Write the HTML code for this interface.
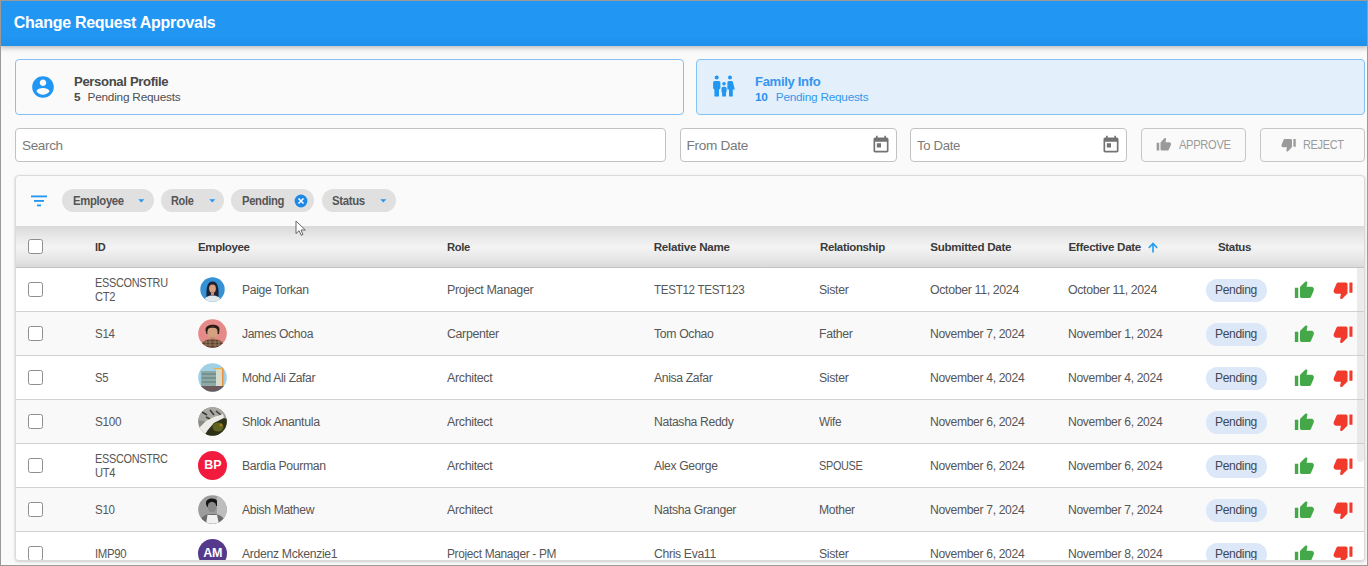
<!DOCTYPE html>
<html><head><meta charset="utf-8"><title>Change Request Approvals</title>
<style>
*{box-sizing:border-box;margin:0;padding:0}
html,body{width:1368px;height:566px;overflow:hidden;background:#fafafa;font-family:"Liberation Sans",sans-serif;color:#424242}
.abs{position:absolute}
.frame{position:absolute;left:0;top:0;width:1368px;height:566px;border:1px solid #9c9a98;pointer-events:none;z-index:50}
.appbar{position:absolute;left:0;top:1px;width:1368px;height:44.7px;background:linear-gradient(#2196f3 80%,#1f90ea 100%);box-shadow:0 2px 5px rgba(0,0,0,.25);z-index:5}
.card{position:absolute;top:59px;height:56px;border:1px solid #84c0f5;border-radius:4px;background:#fafafa}
.ct{position:absolute;white-space:nowrap;line-height:1}
.inp{position:absolute;top:128px;height:34px;border:1px solid #c2c2c2;border-radius:4px;background:#fff}
.btn{position:absolute;top:128px;height:34px;border:1px solid #c6c6c6;border-radius:4px;background:#fafafa}
.tcard{position:absolute;left:15px;top:175px;width:1350px;height:386px;border:1px solid #dadada;border-radius:4px;background:#fafafa;box-shadow:0 1px 3px rgba(0,0,0,.18);overflow:hidden}
.chip{position:absolute;top:13px;height:23px;border-radius:12px;background:#e0e0e0}
.thead{position:absolute;left:0;top:50px;width:1350px;height:42px;background:linear-gradient(#d9d9d9 0%,#e8e8e8 25%,#f3f3f3 52%,#e8e8e8 78%,#dadada 100%);border-bottom:1px solid #c2c2c2}
.row{position:absolute;left:0;width:1348px;height:44px;border-bottom:1px solid #d2d2d2}
.cb{position:absolute;left:12px;width:14.6px;height:14.6px;border:1.9px solid #8e8e8e;border-radius:2.5px;background:#fff}
.av{position:absolute;left:182.3px;width:29px;height:29px}
.ini{width:29px;height:29px;border-radius:50%;color:#fff;font-weight:bold;font-size:12.5px;line-height:29px;text-align:center;letter-spacing:-0.2px}
.pend{position:absolute;left:1190px;width:61px;height:23px;border-radius:12px;background:#dce8f8}
.ic{position:absolute}
</style></head><body>
<div class="frame"></div>

<div class="appbar"><div class="ct" style="left:13.80px;top:14.16px;font-size:16.00px;font-weight:bold;color:#fff;letter-spacing:-0.277px;">Change Request Approvals</div></div>
<div class="card" style="left:15px;width:669px"><svg class="ic" style="left:14px;top:14px" width="26" height="26" viewBox="0 0 24 24"><path fill="#2196f3" d="M12 2C6.48 2 2 6.48 2 12s4.48 10 10 10 10-4.48 10-10S17.52 2 12 2zm0 3c1.66 0 3 1.34 3 3s-1.34 3-3 3-3-1.34-3-3 1.34-3 3-3zm0 14.2c-2.5 0-4.71-1.28-6-3.22.03-1.99 4-3.08 6-3.08 1.99 0 5.97 1.09 6 3.08-1.29 1.94-3.5 3.22-6 3.22z"/></svg><div class="ct" style="left:58.00px;top:15.26px;font-size:13.40px;font-weight:bold;color:#484848;letter-spacing:-0.350px;transform:scaleX(0.9782);transform-origin:0 0;">Personal Profile</div><div class="ct" style="left:58.00px;top:31.51px;font-size:11.80px;font-weight:bold;color:#4a4a4a;letter-spacing:-0.088px;">5</div><div class="ct" style="left:71.50px;top:31.51px;font-size:11.80px;color:#4f4f4f;letter-spacing:-0.218px;">Pending Requests</div></div>
<div class="card" style="left:696px;width:669px;background:#e3f0fb;border-color:#86c1f4"><svg class="ic" style="left:14px;top:14px" width="26" height="26" viewBox="0 0 26 26"><g fill="#2196f3">
  <circle cx="5.7" cy="3.5" r="2.0"/><rect x="2.1" y="7" width="7.3" height="8.4" rx="1.6"/><rect x="3.4" y="13" width="4.6" height="9.5" rx="0.6"/>
  <circle cx="13" cy="9.7" r="1.8"/><rect x="10.5" y="12.8" width="5.1" height="6" rx="1.6"/><rect x="11.1" y="16" width="3.9" height="6.5" rx="0.5"/>
  <circle cx="19" cy="3.4" r="2.0"/><path d="M17.8 7h2.6c.8 0 1.3.5 1.5 1.2l1.9 7.3h-2.0v7h-3.8v-7h-1.6V9c0-1.2.6-2 1.4-2z"/>
 </g></svg><div class="ct" style="left:58.30px;top:15.16px;font-size:13.40px;font-weight:bold;color:#3595ef;letter-spacing:-0.350px;transform:scaleX(0.9779);transform-origin:0 0;">Family Info</div><div class="ct" style="left:58.30px;top:31.51px;font-size:11.80px;font-weight:bold;color:#2a90ef;letter-spacing:-0.350px;transform:scaleX(0.9978);transform-origin:0 0;">10</div><div class="ct" style="left:78.80px;top:31.51px;font-size:11.80px;color:#3597ef;letter-spacing:-0.244px;">Pending Requests</div></div>
<div class="inp" style="left:15px;width:651px"><div class="ct" style="left:5.80px;top:9.99px;font-size:13.60px;color:#7a7a7a;letter-spacing:-0.350px;transform:scaleX(0.9948);transform-origin:0 0;">Search</div></div>
<div class="inp" style="left:680px;width:217px"><div class="ct" style="left:5.60px;top:9.99px;font-size:13.60px;color:#7a7a7a;letter-spacing:-0.308px;">From Date</div><svg class="ic" style="left:190px;top:5.5px" width="20" height="20" viewBox="0 0 24 24"><path fill="#737373" d="M19 3h-1V1h-2v2H8V1H6v2H5c-1.11 0-1.99.9-1.99 2L3 19c0 1.1.89 2 2 2h14c1.1 0 2-.9 2-2V5c0-1.1-.9-2-2-2zm0 16H5V8h14v11zM7 10h5v5H7z"/></svg></div>
<div class="inp" style="left:910px;width:217px"><div class="ct" style="left:5.60px;top:9.99px;font-size:13.60px;color:#7a7a7a;letter-spacing:-0.350px;transform:scaleX(0.9673);transform-origin:0 0;">To Date</div><svg class="ic" style="left:190px;top:5.5px" width="20" height="20" viewBox="0 0 24 24"><path fill="#737373" d="M19 3h-1V1h-2v2H8V1H6v2H5c-1.11 0-1.99.9-1.99 2L3 19c0 1.1.89 2 2 2h14c1.1 0 2-.9 2-2V5c0-1.1-.9-2-2-2zm0 16H5V8h14v11zM7 10h5v5H7z"/></svg></div>
<div class="btn" style="left:1141px;width:105px"><svg class="ic" style="left:14.2px;top:8.4px" width="15.5" height="15.5" viewBox="0 0 24 24"><path fill="#9a9a9a" d="M13.12 2.06L7.58 7.6c-.37.37-.58.88-.58 1.41V19c0 1.1.9 2 2 2h9c.8 0 1.52-.48 1.84-1.21l3.26-7.61C23.94 10.2 22.49 8 20.34 8h-5.65l.95-4.58c.1-.5-.05-1.01-.41-1.37-.59-.58-1.53-.58-2.11.01zM1 9h4v12H1z"/></svg><div class="ct" style="left:36.70px;top:10.36px;font-size:12.80px;color:#9a9a9a;letter-spacing:-0.350px;transform:scaleX(0.8684);transform-origin:0 0;">APPROVE</div></div>
<div class="btn" style="left:1260px;width:105px"><svg class="ic" style="left:19.5px;top:8.1px" width="15.5" height="15.5" viewBox="0 0 24 24"><path fill="#9a9a9a" d="M10.88 21.94l5.53-5.54c.37-.37.58-.88.58-1.41V5c0-1.1-.9-2-2-2H6c-.8 0-1.52.48-1.83 1.21L.91 11.82C.06 13.8 1.51 16 3.66 16h5.65l-.95 4.58c-.1.5.05 1.01.41 1.37.59.58 1.53.58 2.11-.01zM19.2 3h3.6v12h-3.6z"/></svg><div class="ct" style="left:41.60px;top:10.36px;font-size:12.80px;color:#9a9a9a;letter-spacing:-0.350px;transform:scaleX(0.8530);transform-origin:0 0;">REJECT</div></div>
<div class="tcard">
<svg class="ic" style="left:15px;top:19px" width="16" height="12" viewBox="0 0 16 12"><g fill="#2196f3"><rect x="0" y="0.5" width="16" height="1.8"/><rect x="3" y="5" width="10" height="1.8"/><rect x="6" y="9.5" width="4" height="1.8"/></g></svg>
<div class="chip" style="left:46.3px;width:91.7px"><div class="ct" style="left:10.30px;top:5.84px;font-size:12.00px;font-weight:bold;color:#555;letter-spacing:-0.350px;transform:scaleX(0.9419);transform-origin:0 0;">Employee</div><svg class="ic" style="left:75.7px;top:9.5px" width="8" height="5" viewBox="0 0 8 5"><path fill="#2196f3" d="M0.3 0.2h6l-3 3.2z"/></svg></div>
<div class="chip" style="left:145.0px;width:63.1px"><div class="ct" style="left:10.30px;top:5.84px;font-size:12.00px;font-weight:bold;color:#555;letter-spacing:-0.350px;transform:scaleX(0.9138);transform-origin:0 0;">Role</div><svg class="ic" style="left:47.6px;top:9.5px" width="8" height="5" viewBox="0 0 8 5"><path fill="#2196f3" d="M0.3 0.2h6l-3 3.2z"/></svg></div>
<div class="chip" style="left:215.4px;width:83.0px"><div class="ct" style="left:10.80px;top:5.84px;font-size:12.00px;font-weight:bold;color:#555;letter-spacing:-0.350px;transform:scaleX(0.9381);transform-origin:0 0;">Pending</div><svg class="ic" style="left:63px;top:4.5px" width="14" height="14" viewBox="0 0 14 14"><circle cx="7" cy="7" r="6.4" fill="#1e88e5"/><path d="M4.5 4.5l5 5M9.5 4.5l-5 5" stroke="#fff" stroke-width="1.45"/></svg></div>
<div class="chip" style="left:306.0px;width:73.6px"><div class="ct" style="left:10.00px;top:5.84px;font-size:12.00px;font-weight:bold;color:#555;letter-spacing:-0.350px;transform:scaleX(0.9499);transform-origin:0 0;">Status</div><svg class="ic" style="left:58.0px;top:9.5px" width="8" height="5" viewBox="0 0 8 5"><path fill="#2196f3" d="M0.3 0.2h6l-3 3.2z"/></svg></div>
<div class="thead">
<div class="cb" style="top:13px"></div>
<div class="ct" style="left:78.80px;top:15.08px;font-size:11.60px;font-weight:bold;color:#3a3a3a;letter-spacing:-0.350px;transform:scaleX(0.9493);transform-origin:0 0;">ID</div>
<div class="ct" style="left:181.50px;top:15.08px;font-size:11.60px;font-weight:bold;color:#3a3a3a;letter-spacing:-0.350px;transform:scaleX(0.9931);transform-origin:0 0;">Employee</div>
<div class="ct" style="left:430.70px;top:15.08px;font-size:11.60px;font-weight:bold;color:#3a3a3a;letter-spacing:-0.350px;transform:scaleX(0.9675);transform-origin:0 0;">Role</div>
<div class="ct" style="left:637.70px;top:15.08px;font-size:11.60px;font-weight:bold;color:#3a3a3a;letter-spacing:-0.247px;">Relative Name</div>
<div class="ct" style="left:803.50px;top:15.08px;font-size:11.60px;font-weight:bold;color:#3a3a3a;letter-spacing:-0.350px;transform:scaleX(0.9916);transform-origin:0 0;">Relationship</div>
<div class="ct" style="left:914.20px;top:15.08px;font-size:11.60px;font-weight:bold;color:#3a3a3a;letter-spacing:-0.282px;">Submitted Date</div>
<div class="ct" style="left:1052.40px;top:15.08px;font-size:11.60px;font-weight:bold;color:#3a3a3a;letter-spacing:-0.289px;">Effective Date</div>
<div class="ct" style="left:1202.10px;top:15.08px;font-size:11.60px;font-weight:bold;color:#3a3a3a;letter-spacing:-0.350px;transform:scaleX(0.9933);transform-origin:0 0;">Status</div>
<svg class="ic" style="left:1131px;top:16px" width="12" height="11" viewBox="0 0 12 11"><path d="M6 10.5V1.8M1.8 5.8L6 1.5l4.2 4.3" stroke="#2aa0f2" stroke-width="1.7" fill="none"/></svg>
</div>
<div class="row" style="top:92px;background:#ffffff"><div class="cb" style="top:14.2px"></div><div class="ct" style="left:78.60px;top:8.82px;font-size:12.50px;color:#565656;letter-spacing:-0.350px;transform:scaleX(0.8730);transform-origin:0 0;">ESSCONSTRU</div><div class="ct" style="left:78.60px;top:22.72px;font-size:12.50px;color:#565656;letter-spacing:-0.350px;transform:scaleX(0.8921);transform-origin:0 0;">CT2</div><div class="av" style="top:6.5px"><svg width="29" height="29" viewBox="0 0 29 29"><defs><clipPath id="c1"><circle cx="14.5" cy="14.5" r="12.2"/></clipPath></defs><g clip-path="url(#c1)"><rect width="29" height="29" fill="#3592d6"/><path d="M8.5 22 C8 12 9.5 6.5 14.5 6.5 C19.5 6.5 21 12 20.5 22 Z" fill="#1d2238"/><ellipse cx="14.5" cy="13.6" rx="3.4" ry="4.2" fill="#d8a07c"/><rect x="13" y="16.5" width="3" height="3.5" fill="#c98a66"/><path d="M5 29 C6 22 10 20.5 14.5 20.5 C19 20.5 23 22 24 29 Z" fill="#dfe8ea"/></g></svg></div><div class="ct" style="left:226.00px;top:15.82px;font-size:12.50px;color:#565656;letter-spacing:-0.350px;transform:scaleX(0.9730);transform-origin:0 0;">Paige Torkan</div><div class="ct" style="left:430.60px;top:15.82px;font-size:12.50px;color:#565656;letter-spacing:-0.350px;transform:scaleX(0.9981);transform-origin:0 0;">Project Manager</div><div class="ct" style="left:638.00px;top:15.82px;font-size:12.50px;color:#565656;letter-spacing:-0.350px;transform:scaleX(0.9309);transform-origin:0 0;">TEST12 TEST123</div><div class="ct" style="left:803.30px;top:15.82px;font-size:12.50px;color:#565656;letter-spacing:-0.350px;transform:scaleX(0.9858);transform-origin:0 0;">Sister</div><div class="ct" style="left:913.80px;top:15.82px;font-size:12.50px;color:#565656;letter-spacing:-0.350px;transform:scaleX(0.9870);transform-origin:0 0;">October 11, 2024</div><div class="ct" style="left:1051.90px;top:15.82px;font-size:12.50px;color:#565656;letter-spacing:-0.350px;transform:scaleX(0.9870);transform-origin:0 0;">October 11, 2024</div><div class="pend" style="top:10.7px"><div class="ct" style="left:9.30px;top:5.53px;font-size:12.60px;color:#424752;letter-spacing:-0.350px;transform:scaleX(0.9592);transform-origin:0 0;">Pending</div></div><svg class="ic" style="left:1278px;top:12.1px" width="20.5" height="20.5" viewBox="0 0 24 24"><path fill="#45a848" d="M13.12 2.06L7.58 7.6c-.37.37-.58.88-.58 1.41V19c0 1.1.9 2 2 2h9c.8 0 1.52-.48 1.84-1.21l3.26-7.61C23.94 10.2 22.49 8 20.34 8h-5.65l.95-4.58c.1-.5-.05-1.01-.41-1.37-.59-.58-1.53-.58-2.11.01zM1 9h4v12H1z"/></svg><svg class="ic" style="left:1316.7px;top:12px" width="20.5" height="20.5" viewBox="0 0 24 24"><path fill="#f23a2c" d="M10.88 21.94l5.53-5.54c.37-.37.58-.88.58-1.41V5c0-1.1-.9-2-2-2H6c-.8 0-1.52.48-1.83 1.21L.91 11.82C.06 13.8 1.51 16 3.66 16h5.65l-.95 4.58c-.1.5.05 1.01.41 1.37.59.58 1.53.58 2.11-.01zM19.2 3h3.6v12h-3.6z"/></svg></div>
<div class="row" style="top:136px;background:#f9f9f9"><div class="cb" style="top:14.2px"></div><div class="ct" style="left:78.60px;top:15.82px;font-size:12.50px;color:#565656;letter-spacing:-0.350px;transform:scaleX(0.9240);transform-origin:0 0;">S14</div><div class="av" style="top:6.5px"><svg width="29" height="29" viewBox="0 0 29 29"><defs><clipPath id="c2"><circle cx="14.5" cy="14.5" r="14.3"/></clipPath></defs><g clip-path="url(#c2)"><rect width="29" height="29" fill="#e58a88"/><path d="M7.5 11 C7 4.5 21 4 21.5 10 L21 15 L8.5 15 Z" fill="#2a1a14"/><ellipse cx="14.5" cy="13.5" rx="5.2" ry="6.3" fill="#d3a080"/><path d="M9 10.5 C10 8 19 8 20 10.5 L20 9 C18 6.5 11 6.5 9 9 Z" fill="#2a1a14"/><rect x="12" y="18" width="5" height="4" fill="#c48f70"/><path d="M2 29 C3 22 8 20.5 14.5 20.5 C21 20.5 26 22 27 29 Z" fill="#5a4030"/><path d="M4 23h21M3 26h23M8 20v9M12 20v9M17 20v9M21 20v9" stroke="#a08060" stroke-width="0.9"/></g></svg></div><div class="ct" style="left:226.00px;top:15.82px;font-size:12.50px;color:#565656;letter-spacing:-0.350px;transform:scaleX(0.9696);transform-origin:0 0;">James Ochoa</div><div class="ct" style="left:430.60px;top:15.82px;font-size:12.50px;color:#565656;letter-spacing:-0.350px;transform:scaleX(0.9896);transform-origin:0 0;">Carpenter</div><div class="ct" style="left:638.00px;top:15.82px;font-size:12.50px;color:#565656;letter-spacing:-0.350px;transform:scaleX(0.9801);transform-origin:0 0;">Tom Ochao</div><div class="ct" style="left:803.30px;top:15.82px;font-size:12.50px;color:#565656;letter-spacing:-0.350px;transform:scaleX(0.9817);transform-origin:0 0;">Father</div><div class="ct" style="left:913.80px;top:15.82px;font-size:12.50px;color:#565656;letter-spacing:-0.350px;transform:scaleX(0.9700);transform-origin:0 0;">November 7, 2024</div><div class="ct" style="left:1051.90px;top:15.82px;font-size:12.50px;color:#565656;letter-spacing:-0.350px;transform:scaleX(0.9700);transform-origin:0 0;">November 1, 2024</div><div class="pend" style="top:10.7px"><div class="ct" style="left:9.30px;top:5.53px;font-size:12.60px;color:#424752;letter-spacing:-0.350px;transform:scaleX(0.9592);transform-origin:0 0;">Pending</div></div><svg class="ic" style="left:1278px;top:12.1px" width="20.5" height="20.5" viewBox="0 0 24 24"><path fill="#45a848" d="M13.12 2.06L7.58 7.6c-.37.37-.58.88-.58 1.41V19c0 1.1.9 2 2 2h9c.8 0 1.52-.48 1.84-1.21l3.26-7.61C23.94 10.2 22.49 8 20.34 8h-5.65l.95-4.58c.1-.5-.05-1.01-.41-1.37-.59-.58-1.53-.58-2.11.01zM1 9h4v12H1z"/></svg><svg class="ic" style="left:1316.7px;top:12px" width="20.5" height="20.5" viewBox="0 0 24 24"><path fill="#f23a2c" d="M10.88 21.94l5.53-5.54c.37-.37.58-.88.58-1.41V5c0-1.1-.9-2-2-2H6c-.8 0-1.52.48-1.83 1.21L.91 11.82C.06 13.8 1.51 16 3.66 16h5.65l-.95 4.58c-.1.5.05 1.01.41 1.37.59.58 1.53.58 2.11-.01zM19.2 3h3.6v12h-3.6z"/></svg></div>
<div class="row" style="top:180px;background:#ffffff"><div class="cb" style="top:14.2px"></div><div class="ct" style="left:78.60px;top:15.82px;font-size:12.50px;color:#565656;letter-spacing:-0.350px;transform:scaleX(0.9007);transform-origin:0 0;">S5</div><div class="av" style="top:6.5px"><svg width="29" height="29" viewBox="0 0 29 29"><defs><clipPath id="c3"><circle cx="14.5" cy="14.5" r="14.3"/></clipPath></defs><g clip-path="url(#c3)"><rect width="29" height="29" fill="#9fd0e6"/><rect x="3" y="8" width="16" height="16" fill="#8fa9a6"/><path d="M4 11h14M4 15h14M4 19h14" stroke="#5f7c78" stroke-width="1.2"/><rect x="18" y="6" width="7" height="18" fill="#d8dccc"/><rect x="24" y="4" width="1.5" height="20" fill="#e8913a"/><rect x="16" y="5" width="10" height="1.2" fill="#e8b04a"/><rect x="0" y="23" width="29" height="6" fill="#6a5a5c"/></g></svg></div><div class="ct" style="left:226.00px;top:15.82px;font-size:12.50px;color:#565656;letter-spacing:-0.350px;transform:scaleX(0.9665);transform-origin:0 0;">Mohd Ali Zafar</div><div class="ct" style="left:430.60px;top:15.82px;font-size:12.50px;color:#565656;letter-spacing:-0.350px;transform:scaleX(0.9964);transform-origin:0 0;">Architect</div><div class="ct" style="left:638.00px;top:15.82px;font-size:12.50px;color:#565656;letter-spacing:-0.350px;transform:scaleX(0.9722);transform-origin:0 0;">Anisa Zafar</div><div class="ct" style="left:803.30px;top:15.82px;font-size:12.50px;color:#565656;letter-spacing:-0.350px;transform:scaleX(0.9858);transform-origin:0 0;">Sister</div><div class="ct" style="left:913.80px;top:15.82px;font-size:12.50px;color:#565656;letter-spacing:-0.350px;transform:scaleX(0.9700);transform-origin:0 0;">November 4, 2024</div><div class="ct" style="left:1051.90px;top:15.82px;font-size:12.50px;color:#565656;letter-spacing:-0.350px;transform:scaleX(0.9700);transform-origin:0 0;">November 4, 2024</div><div class="pend" style="top:10.7px"><div class="ct" style="left:9.30px;top:5.53px;font-size:12.60px;color:#424752;letter-spacing:-0.350px;transform:scaleX(0.9592);transform-origin:0 0;">Pending</div></div><svg class="ic" style="left:1278px;top:12.1px" width="20.5" height="20.5" viewBox="0 0 24 24"><path fill="#45a848" d="M13.12 2.06L7.58 7.6c-.37.37-.58.88-.58 1.41V19c0 1.1.9 2 2 2h9c.8 0 1.52-.48 1.84-1.21l3.26-7.61C23.94 10.2 22.49 8 20.34 8h-5.65l.95-4.58c.1-.5-.05-1.01-.41-1.37-.59-.58-1.53-.58-2.11.01zM1 9h4v12H1z"/></svg><svg class="ic" style="left:1316.7px;top:12px" width="20.5" height="20.5" viewBox="0 0 24 24"><path fill="#f23a2c" d="M10.88 21.94l5.53-5.54c.37-.37.58-.88.58-1.41V5c0-1.1-.9-2-2-2H6c-.8 0-1.52.48-1.83 1.21L.91 11.82C.06 13.8 1.51 16 3.66 16h5.65l-.95 4.58c-.1.5.05 1.01.41 1.37.59.58 1.53.58 2.11-.01zM19.2 3h3.6v12h-3.6z"/></svg></div>
<div class="row" style="top:224px;background:#f9f9f9"><div class="cb" style="top:14.2px"></div><div class="ct" style="left:78.60px;top:15.82px;font-size:12.50px;color:#565656;letter-spacing:-0.350px;transform:scaleX(0.9398);transform-origin:0 0;">S100</div><div class="av" style="top:6.5px"><svg width="29" height="29" viewBox="0 0 29 29"><defs><clipPath id="c4"><circle cx="14.5" cy="14.5" r="14.3"/></clipPath></defs><g clip-path="url(#c4)"><rect width="29" height="29" fill="#8a8a84"/><path d="M0 0h29v14L20 11 10 15 0 13z" fill="#a9a8a2"/><path d="M4 5l5 3M12 3l4 5M18 4l5 4M8 10l4 2M20 9l4 1" stroke="#3c3c36" stroke-width="1.6"/><path d="M0 22 L8 14 L16 10 L25 7 L26 11 L16 16 L10 23 L6 29 L0 29Z" fill="#ecebe6"/><path d="M10 23 L16 16 L26 11 L29 12 L29 29 L6 29Z" fill="#2e3018"/><ellipse cx="20" cy="20" rx="5.5" ry="4.5" fill="#5e6420"/><circle cx="23" cy="18" r="1.6" fill="#a0781e"/></g></svg></div><div class="ct" style="left:226.00px;top:15.82px;font-size:12.50px;color:#565656;letter-spacing:-0.350px;transform:scaleX(0.9895);transform-origin:0 0;">Shlok Anantula</div><div class="ct" style="left:430.60px;top:15.82px;font-size:12.50px;color:#565656;letter-spacing:-0.350px;transform:scaleX(0.9964);transform-origin:0 0;">Architect</div><div class="ct" style="left:638.00px;top:15.82px;font-size:12.50px;color:#565656;letter-spacing:-0.350px;transform:scaleX(0.9748);transform-origin:0 0;">Natasha Reddy</div><div class="ct" style="left:803.30px;top:15.82px;font-size:12.50px;color:#565656;letter-spacing:-0.350px;transform:scaleX(0.9430);transform-origin:0 0;">Wife</div><div class="ct" style="left:913.80px;top:15.82px;font-size:12.50px;color:#565656;letter-spacing:-0.350px;transform:scaleX(0.9700);transform-origin:0 0;">November 6, 2024</div><div class="ct" style="left:1051.90px;top:15.82px;font-size:12.50px;color:#565656;letter-spacing:-0.350px;transform:scaleX(0.9700);transform-origin:0 0;">November 6, 2024</div><div class="pend" style="top:10.7px"><div class="ct" style="left:9.30px;top:5.53px;font-size:12.60px;color:#424752;letter-spacing:-0.350px;transform:scaleX(0.9592);transform-origin:0 0;">Pending</div></div><svg class="ic" style="left:1278px;top:12.1px" width="20.5" height="20.5" viewBox="0 0 24 24"><path fill="#45a848" d="M13.12 2.06L7.58 7.6c-.37.37-.58.88-.58 1.41V19c0 1.1.9 2 2 2h9c.8 0 1.52-.48 1.84-1.21l3.26-7.61C23.94 10.2 22.49 8 20.34 8h-5.65l.95-4.58c.1-.5-.05-1.01-.41-1.37-.59-.58-1.53-.58-2.11.01zM1 9h4v12H1z"/></svg><svg class="ic" style="left:1316.7px;top:12px" width="20.5" height="20.5" viewBox="0 0 24 24"><path fill="#f23a2c" d="M10.88 21.94l5.53-5.54c.37-.37.58-.88.58-1.41V5c0-1.1-.9-2-2-2H6c-.8 0-1.52.48-1.83 1.21L.91 11.82C.06 13.8 1.51 16 3.66 16h5.65l-.95 4.58c-.1.5.05 1.01.41 1.37.59.58 1.53.58 2.11-.01zM19.2 3h3.6v12h-3.6z"/></svg></div>
<div class="row" style="top:268px;background:#ffffff"><div class="cb" style="top:14.2px"></div><div class="ct" style="left:78.60px;top:8.82px;font-size:12.50px;color:#565656;letter-spacing:-0.350px;transform:scaleX(0.8721);transform-origin:0 0;">ESSCONSTRC</div><div class="ct" style="left:78.60px;top:22.72px;font-size:12.50px;color:#565656;letter-spacing:-0.350px;transform:scaleX(0.8921);transform-origin:0 0;">UT4</div><div class="av" style="top:6.5px"><div class="ini" style="background:#f01b3d">BP</div></div><div class="ct" style="left:226.00px;top:15.82px;font-size:12.50px;color:#565656;letter-spacing:-0.350px;transform:scaleX(0.9800);transform-origin:0 0;">Bardia Pourman</div><div class="ct" style="left:430.60px;top:15.82px;font-size:12.50px;color:#565656;letter-spacing:-0.350px;transform:scaleX(0.9964);transform-origin:0 0;">Architect</div><div class="ct" style="left:638.00px;top:15.82px;font-size:12.50px;color:#565656;letter-spacing:-0.350px;transform:scaleX(0.9680);transform-origin:0 0;">Alex George</div><div class="ct" style="left:803.30px;top:15.82px;font-size:12.50px;color:#565656;letter-spacing:-0.350px;transform:scaleX(0.8695);transform-origin:0 0;">SPOUSE</div><div class="ct" style="left:913.80px;top:15.82px;font-size:12.50px;color:#565656;letter-spacing:-0.350px;transform:scaleX(0.9700);transform-origin:0 0;">November 6, 2024</div><div class="ct" style="left:1051.90px;top:15.82px;font-size:12.50px;color:#565656;letter-spacing:-0.350px;transform:scaleX(0.9700);transform-origin:0 0;">November 6, 2024</div><div class="pend" style="top:10.7px"><div class="ct" style="left:9.30px;top:5.53px;font-size:12.60px;color:#424752;letter-spacing:-0.350px;transform:scaleX(0.9592);transform-origin:0 0;">Pending</div></div><svg class="ic" style="left:1278px;top:12.1px" width="20.5" height="20.5" viewBox="0 0 24 24"><path fill="#45a848" d="M13.12 2.06L7.58 7.6c-.37.37-.58.88-.58 1.41V19c0 1.1.9 2 2 2h9c.8 0 1.52-.48 1.84-1.21l3.26-7.61C23.94 10.2 22.49 8 20.34 8h-5.65l.95-4.58c.1-.5-.05-1.01-.41-1.37-.59-.58-1.53-.58-2.11.01zM1 9h4v12H1z"/></svg><svg class="ic" style="left:1316.7px;top:12px" width="20.5" height="20.5" viewBox="0 0 24 24"><path fill="#f23a2c" d="M10.88 21.94l5.53-5.54c.37-.37.58-.88.58-1.41V5c0-1.1-.9-2-2-2H6c-.8 0-1.52.48-1.83 1.21L.91 11.82C.06 13.8 1.51 16 3.66 16h5.65l-.95 4.58c-.1.5.05 1.01.41 1.37.59.58 1.53.58 2.11-.01zM19.2 3h3.6v12h-3.6z"/></svg></div>
<div class="row" style="top:312px;background:#f9f9f9"><div class="cb" style="top:14.2px"></div><div class="ct" style="left:78.60px;top:15.82px;font-size:12.50px;color:#565656;letter-spacing:-0.350px;transform:scaleX(0.9240);transform-origin:0 0;">S10</div><div class="av" style="top:6.5px"><svg width="29" height="29" viewBox="0 0 29 29"><defs><clipPath id="c6"><circle cx="14.5" cy="14.5" r="14.3"/></clipPath></defs><g clip-path="url(#c6)"><rect width="29" height="29" fill="#9c9c9c"/><rect x="19" y="0" width="10" height="29" fill="#bdbdbd"/><path d="M8 9 C7 3 17 2 19 6 L19 11 L9 12Z" fill="#141414"/><ellipse cx="14" cy="12" rx="4.3" ry="5.3" fill="#8a8a8a"/><path d="M1 29 C2 22 7 19 14 19 C21 19 26 21 28 29 Z" fill="#6a6a6a"/><path d="M8 29 L9.5 20 L19 20 L21 29Z" fill="#f0f0f0"/></g></svg></div><div class="ct" style="left:226.00px;top:15.82px;font-size:12.50px;color:#565656;letter-spacing:-0.350px;transform:scaleX(0.9700);transform-origin:0 0;">Abish Mathew</div><div class="ct" style="left:430.60px;top:15.82px;font-size:12.50px;color:#565656;letter-spacing:-0.350px;transform:scaleX(0.9964);transform-origin:0 0;">Architect</div><div class="ct" style="left:638.00px;top:15.82px;font-size:12.50px;color:#565656;letter-spacing:-0.350px;transform:scaleX(0.9769);transform-origin:0 0;">Natsha Granger</div><div class="ct" style="left:803.30px;top:15.82px;font-size:12.50px;color:#565656;letter-spacing:-0.350px;transform:scaleX(0.9729);transform-origin:0 0;">Mother</div><div class="ct" style="left:913.80px;top:15.82px;font-size:12.50px;color:#565656;letter-spacing:-0.350px;transform:scaleX(0.9700);transform-origin:0 0;">November 7, 2024</div><div class="ct" style="left:1051.90px;top:15.82px;font-size:12.50px;color:#565656;letter-spacing:-0.350px;transform:scaleX(0.9700);transform-origin:0 0;">November 7, 2024</div><div class="pend" style="top:10.7px"><div class="ct" style="left:9.30px;top:5.53px;font-size:12.60px;color:#424752;letter-spacing:-0.350px;transform:scaleX(0.9592);transform-origin:0 0;">Pending</div></div><svg class="ic" style="left:1278px;top:12.1px" width="20.5" height="20.5" viewBox="0 0 24 24"><path fill="#45a848" d="M13.12 2.06L7.58 7.6c-.37.37-.58.88-.58 1.41V19c0 1.1.9 2 2 2h9c.8 0 1.52-.48 1.84-1.21l3.26-7.61C23.94 10.2 22.49 8 20.34 8h-5.65l.95-4.58c.1-.5-.05-1.01-.41-1.37-.59-.58-1.53-.58-2.11.01zM1 9h4v12H1z"/></svg><svg class="ic" style="left:1316.7px;top:12px" width="20.5" height="20.5" viewBox="0 0 24 24"><path fill="#f23a2c" d="M10.88 21.94l5.53-5.54c.37-.37.58-.88.58-1.41V5c0-1.1-.9-2-2-2H6c-.8 0-1.52.48-1.83 1.21L.91 11.82C.06 13.8 1.51 16 3.66 16h5.65l-.95 4.58c-.1.5.05 1.01.41 1.37.59.58 1.53.58 2.11-.01zM19.2 3h3.6v12h-3.6z"/></svg></div>
<div class="row" style="top:356px;background:#ffffff"><div class="cb" style="top:14.2px"></div><div class="ct" style="left:78.60px;top:15.82px;font-size:12.50px;color:#565656;letter-spacing:-0.350px;transform:scaleX(0.9099);transform-origin:0 0;">IMP90</div><div class="av" style="top:6.5px"><div class="ini" style="background:#553a8c">AM</div></div><div class="ct" style="left:226.00px;top:15.82px;font-size:12.50px;color:#565656;letter-spacing:-0.350px;transform:scaleX(0.9798);transform-origin:0 0;">Ardenz Mckenzie1</div><div class="ct" style="left:430.60px;top:15.82px;font-size:12.50px;color:#565656;letter-spacing:-0.350px;transform:scaleX(0.9521);transform-origin:0 0;">Project Manager - PM</div><div class="ct" style="left:638.00px;top:15.82px;font-size:12.50px;color:#565656;letter-spacing:-0.350px;transform:scaleX(0.9768);transform-origin:0 0;">Chris Eva11</div><div class="ct" style="left:803.30px;top:15.82px;font-size:12.50px;color:#565656;letter-spacing:-0.350px;transform:scaleX(0.9858);transform-origin:0 0;">Sister</div><div class="ct" style="left:913.80px;top:15.82px;font-size:12.50px;color:#565656;letter-spacing:-0.350px;transform:scaleX(0.9700);transform-origin:0 0;">November 6, 2024</div><div class="ct" style="left:1051.90px;top:15.82px;font-size:12.50px;color:#565656;letter-spacing:-0.350px;transform:scaleX(0.9700);transform-origin:0 0;">November 8, 2024</div><div class="pend" style="top:10.7px"><div class="ct" style="left:9.30px;top:5.53px;font-size:12.60px;color:#424752;letter-spacing:-0.350px;transform:scaleX(0.9592);transform-origin:0 0;">Pending</div></div><svg class="ic" style="left:1278px;top:12.1px" width="20.5" height="20.5" viewBox="0 0 24 24"><path fill="#45a848" d="M13.12 2.06L7.58 7.6c-.37.37-.58.88-.58 1.41V19c0 1.1.9 2 2 2h9c.8 0 1.52-.48 1.84-1.21l3.26-7.61C23.94 10.2 22.49 8 20.34 8h-5.65l.95-4.58c.1-.5-.05-1.01-.41-1.37-.59-.58-1.53-.58-2.11.01zM1 9h4v12H1z"/></svg><svg class="ic" style="left:1316.7px;top:12px" width="20.5" height="20.5" viewBox="0 0 24 24"><path fill="#f23a2c" d="M10.88 21.94l5.53-5.54c.37-.37.58-.88.58-1.41V5c0-1.1-.9-2-2-2H6c-.8 0-1.52.48-1.83 1.21L.91 11.82C.06 13.8 1.51 16 3.66 16h5.65l-.95 4.58c-.1.5.05 1.01.41 1.37.59.58 1.53.58 2.11-.01zM19.2 3h3.6v12h-3.6z"/></svg></div>
<div class="abs" style="left:1341px;top:92px;width:7px;height:194px;background:rgba(200,200,200,.35);border-radius:0 0 3.5px 3.5px"></div>
</div>
<svg class="ic" style="left:294.6px;top:220px;z-index:20" width="12" height="16" viewBox="0 0 12 16"><path d="M1 1v12.6l3.1-2.9 2.1 4.6 1.8-.8-2-4.5h4.3z" fill="#fff" stroke="#666" stroke-width="1"/></svg>
</body></html>
